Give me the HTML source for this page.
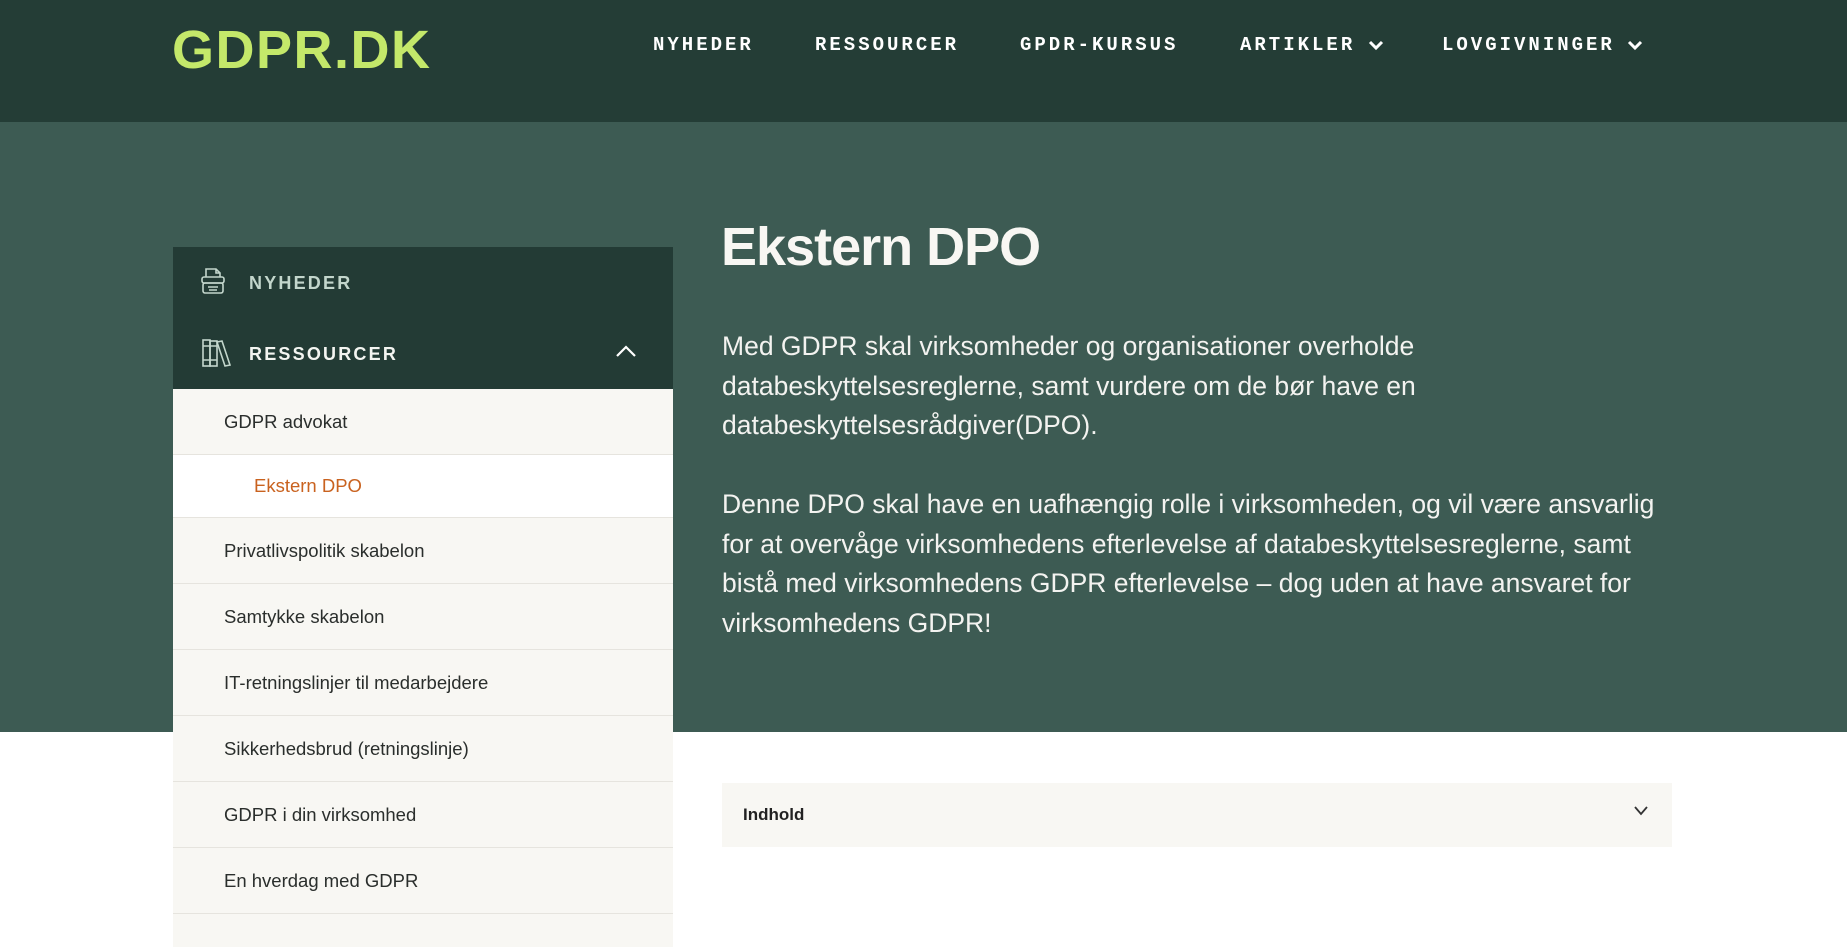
<!DOCTYPE html>
<html><head><meta charset="utf-8"><style>
*{margin:0;padding:0;box-sizing:border-box}
body{width:1847px;height:878px;overflow:hidden;background:#fff;font-family:"Liberation Sans",sans-serif;position:relative}
.hdr{position:absolute;left:0;top:0;width:1847px;height:122px;background:#243d36}
.logo{position:absolute;left:172px;top:19px;font-size:54px;font-weight:bold;color:#c4e86a;letter-spacing:1.5px}
.nav{position:absolute;top:34px;font-family:"Liberation Mono",monospace;font-weight:bold;font-size:19px;color:#fff;letter-spacing:3px}
.nav svg{vertical-align:middle;margin-left:-2px}
.hero{position:absolute;left:0;top:122px;width:1847px;height:610px;background:#3d5b53}
.side{position:absolute;left:173px;top:247px;width:500px;height:700px;background:#f8f7f3}
.dk{height:71px;background:#233b35;position:relative;color:#c3d6cc;font-weight:bold;font-size:18px;letter-spacing:2.2px}
.dk span{position:absolute;left:76px;top:26px}
.dk svg{position:absolute;left:28px;top:20px}
.it{height:66px;border-bottom:1px solid #e6e4de;font-size:18.5px;color:#2a2e2c;padding:22px 0 0 51px}
h1{position:absolute;left:721px;top:216px;color:#f8f7f3;font-size:54px;font-weight:bold;letter-spacing:-1px}
.p{position:absolute;left:722px;width:1000px;color:#f3f3f0;font-size:26.5px;line-height:39.5px}
.box{position:absolute;left:722px;top:783px;width:950px;height:64px;background:#f8f7f3}
</style></head><body>
<div class="hdr">
<div class="logo">GDPR.DK</div>
<div class="nav" style="left:653px">NYHEDER</div>
<div class="nav" style="left:815px">RESSOURCER</div>
<div class="nav" style="left:1020px">GPDR-KURSUS</div>
<div class="nav" style="left:1240px">ARTIKLER <svg width="16" height="12" viewBox="0 0 16 12"><path d="M2 3l6 6 6-6" stroke="#fff" stroke-width="3" fill="none"/></svg></div>
<div class="nav" style="left:1442px">LOVGIVNINGER <svg width="16" height="12" viewBox="0 0 16 12"><path d="M2 3l6 6 6-6" stroke="#fff" stroke-width="3" fill="none"/></svg></div>
</div>
<div class="hero"></div>
<h1>Ekstern DPO</h1>
<div class="p" style="top:327px">Med GDPR skal virksomheder og organisationer overholde<br>databeskyttelsesreglerne, samt vurdere om de bør have en<br>databeskyttelsesrådgiver(DPO).</div>
<div class="p" style="top:485px">Denne DPO skal have en uafhængig rolle i virksomheden, og vil være ansvarlig<br>for at overvåge virksomhedens efterlevelse af databeskyttelsesreglerne, samt<br>bistå med virksomhedens GDPR efterlevelse – dog uden at have ansvaret for<br>virksomhedens GDPR!</div>
<div class="side">
<div class="dk"><svg width="24" height="28" viewBox="0 0 24 28" fill="none" stroke="#c3d6cc" stroke-width="1.6"><path d="M5 10V2h10l4 4v4M15 2v4h4"/><rect x="1" y="10" width="22" height="6" rx="2"/><rect x="2" y="16" width="20" height="10" rx="2"/><path d="M7 20h10M8 23h8"/></svg><span>NYHEDER</span></div>
<div class="dk"><svg width="30" height="30" viewBox="0 0 30 30" fill="none" stroke="#c3d6cc" stroke-width="1.6"><rect x="2" y="2" width="7" height="26"/><rect x="9" y="3" width="7" height="25"/><path d="M2 8h14M2 22h14M16 4l5-1 8 24-5 1z"/></svg><span style="color:#f3f5f1">RESSOURCER</span><svg style="left:442px;top:26px" width="22" height="14" viewBox="0 0 22 14"><path d="M2 12l9-9 9 9" stroke="#fff" stroke-width="2.2" fill="none"/></svg></div>
<div class="it">GDPR advokat</div>
<div class="it" style="background:#fff;padding-left:81px;color:#c9621f;height:63px;padding-top:20px">Ekstern DPO</div>
<div class="it">Privatlivspolitik skabelon</div>
<div class="it">Samtykke skabelon</div>
<div class="it">IT-retningslinjer til medarbejdere</div>
<div class="it">Sikkerhedsbrud (retningslinje)</div>
<div class="it">GDPR i din virksomhed</div>
<div class="it">En hverdag med GDPR</div>
</div>
<div class="box"><span style="position:absolute;left:21px;top:22px;font-size:17px;font-weight:bold;color:#222">Indhold</span><svg style="position:absolute;left:911px;top:22px" width="16" height="12" viewBox="0 0 16 12"><path d="M2 2l6 7 6-7" stroke="#333" stroke-width="1.8" fill="none"/></svg></div>
</body></html>
